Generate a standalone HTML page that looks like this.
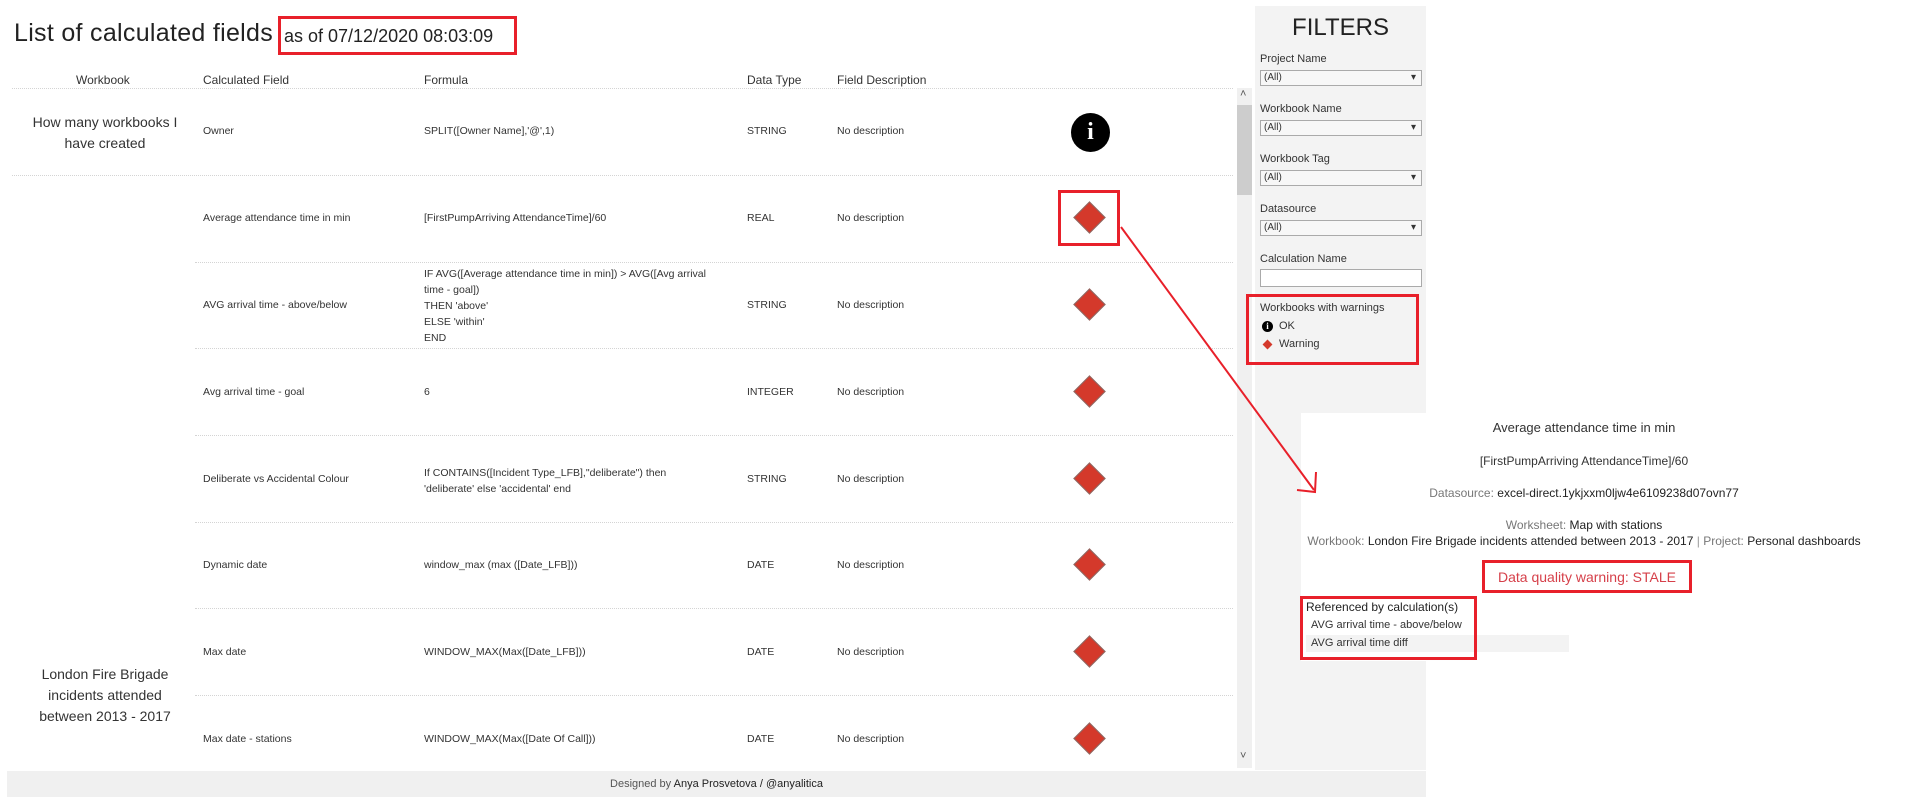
<!DOCTYPE html>
<html><head><meta charset="utf-8"><style>
*{margin:0;padding:0;box-sizing:border-box}
body{width:1914px;height:806px;background:#fff;position:relative;overflow:hidden;font-family:"Liberation Sans",sans-serif;color:#333}
.a{position:absolute;white-space:nowrap}
.s{font-size:10.5px}
.hd{font-size:12px;color:#333}
.sep{position:absolute;height:0;border-top:1px dotted #d4d4d4}
.dia{position:absolute;width:23px;height:23px;background:#d4392b;border:1px solid #8a6a66;transform:rotate(45deg)}
.rb{position:absolute;border:3px solid #e8202a}
.lbl{position:absolute;left:1260px;font-size:11px;color:#333}
.dd{position:absolute;left:1260px;width:162px;height:16px;border:1px solid #aaa;background:#f7f7f7;font-size:10px;padding-left:3px;line-height:14px}
.dd:after{content:"▾";position:absolute;right:5px;top:0;font-size:10px}
.wb{position:absolute;text-align:center;font-size:14px;line-height:21px;color:#333}
</style></head><body>
<div class="a" style="left:14px;top:19px;font-size:25px;color:#222;letter-spacing:0.3px">List of calculated fields</div>
<div class="a" style="left:284px;top:26px;font-size:18px;color:#222">as of 07/12/2020 08:03:09</div>
<div class="rb" style="left:278px;top:16px;width:239px;height:39px"></div>

<div class="a hd" style="left:76px;top:73px">Workbook</div>
<div class="a hd" style="left:203px;top:73px">Calculated Field</div>
<div class="a hd" style="left:424px;top:73px">Formula</div>
<div class="a hd" style="left:747px;top:73px">Data Type</div>
<div class="a hd" style="left:837px;top:73px">Field Description</div>
<div class="sep" style="left:12px;top:88px;width:1221px"></div>
<div class="sep" style="left:12px;top:175px;width:1221px"></div>
<div class="sep" style="left:195px;top:262px;width:1038px"></div>
<div class="sep" style="left:195px;top:348px;width:1038px"></div>
<div class="sep" style="left:195px;top:435px;width:1038px"></div>
<div class="sep" style="left:195px;top:522px;width:1038px"></div>
<div class="sep" style="left:195px;top:608px;width:1038px"></div>
<div class="sep" style="left:195px;top:695px;width:1038px"></div>

<div class="wb" style="left:10px;top:112px;width:190px">How many workbooks I<br>have created</div>
<div class="wb" style="left:10px;top:664px;width:190px">London Fire Brigade<br>incidents attended<br>between 2013 - 2017</div>

<div class="a s" style="left:203px;top:125px">Owner</div>
<div class="a s" style="left:424px;top:125px">SPLIT([Owner Name],'@',1)</div>
<div class="a s" style="left:747px;top:125px">STRING</div>
<div class="a s" style="left:837px;top:125px">No description</div>
<div class="a" style="left:1071px;top:113px;width:39px;height:39px;border-radius:50%;background:#000;color:#fff;font:bold 24px 'Liberation Serif',serif;text-align:center;line-height:39px">i</div>

<div class="a s" style="left:203px;top:212px">Average attendance time in min</div>
<div class="a s" style="left:424px;top:212px">[FirstPumpArriving AttendanceTime]/60</div>
<div class="a s" style="left:747px;top:212px">REAL</div>
<div class="a s" style="left:837px;top:212px">No description</div>
<div class="dia" style="left:1078px;top:206px"></div>
<div class="rb" style="left:1058px;top:190px;width:62px;height:56px"></div>

<div class="a s" style="left:203px;top:299px">AVG arrival time - above/below</div>
<div class="a s" style="left:424px;top:266px;line-height:16px">IF AVG([Average attendance time in min]) &gt; AVG([Avg arrival<br>time - goal])<br>THEN 'above'<br>ELSE 'within'<br>END</div>
<div class="a s" style="left:747px;top:299px">STRING</div>
<div class="a s" style="left:837px;top:299px">No description</div>
<div class="dia" style="left:1078px;top:293px"></div>

<div class="a s" style="left:203px;top:386px">Avg arrival time - goal</div>
<div class="a s" style="left:424px;top:386px">6</div>
<div class="a s" style="left:747px;top:386px">INTEGER</div>
<div class="a s" style="left:837px;top:386px">No description</div>
<div class="dia" style="left:1078px;top:380px"></div>

<div class="a s" style="left:203px;top:473px">Deliberate vs Accidental Colour</div>
<div class="a s" style="left:424px;top:465px;line-height:16px">If CONTAINS([Incident Type_LFB],"deliberate") then<br>'deliberate' else 'accidental' end</div>
<div class="a s" style="left:747px;top:473px">STRING</div>
<div class="a s" style="left:837px;top:473px">No description</div>
<div class="dia" style="left:1078px;top:467px"></div>

<div class="a s" style="left:203px;top:559px">Dynamic date</div>
<div class="a s" style="left:424px;top:559px">window_max (max ([Date_LFB]))</div>
<div class="a s" style="left:747px;top:559px">DATE</div>
<div class="a s" style="left:837px;top:559px">No description</div>
<div class="dia" style="left:1078px;top:553px"></div>

<div class="a s" style="left:203px;top:646px">Max date</div>
<div class="a s" style="left:424px;top:646px">WINDOW_MAX(Max([Date_LFB]))</div>
<div class="a s" style="left:747px;top:646px">DATE</div>
<div class="a s" style="left:837px;top:646px">No description</div>
<div class="dia" style="left:1078px;top:640px"></div>

<div class="a s" style="left:203px;top:733px">Max date - stations</div>
<div class="a s" style="left:424px;top:733px">WINDOW_MAX(Max([Date Of Call]))</div>
<div class="a s" style="left:747px;top:733px">DATE</div>
<div class="a s" style="left:837px;top:733px">No description</div>
<div class="dia" style="left:1078px;top:727px"></div>

<div class="a" style="left:1237px;top:88px;width:15px;height:680px;background:#f0f0f0"></div>
<div class="a" style="left:1237px;top:105px;width:15px;height:90px;background:#cdcdcd"></div>
<div class="a" style="left:1240px;top:88px;font-size:11px;color:#555">˄</div>
<div class="a" style="left:1240px;top:750px;font-size:11px;color:#555">˅</div>

<div class="a" style="left:7px;top:771px;width:1419px;height:26px;background:#f0f0f0;font-size:11px;text-align:center;line-height:26px;color:#555">Designed by <span style="color:#222">Anya Prosvetova / @anyalitica</span></div>

<div class="a" style="left:1255px;top:6px;width:171px;height:764px;background:#f3f3f3"></div>
<div class="a" style="left:1255px;top:14px;width:171px;text-align:center;font-size:24px;color:#222">FILTERS</div>
<div class="lbl" style="top:53px">Project Name</div><div class="dd" style="top:70px">(All)</div>
<div class="lbl" style="top:103px">Workbook Name</div><div class="dd" style="top:120px">(All)</div>
<div class="lbl" style="top:153px">Workbook Tag</div><div class="dd" style="top:170px">(All)</div>
<div class="lbl" style="top:203px">Datasource</div><div class="dd" style="top:220px">(All)</div>
<div class="lbl" style="top:253px">Calculation Name</div>
<div class="a" style="left:1260px;top:269px;width:162px;height:18px;border:1px solid #aaa;background:#fff"></div>
<div class="lbl" style="top:302px">Workbooks with warnings</div>
<div class="a" style="left:1262px;top:321px;width:11px;height:11px;border-radius:50%;background:#000;color:#fff;font:bold 9px 'Liberation Serif',serif;text-align:center;line-height:11px">i</div>
<div class="lbl" style="left:1279px;top:320px">OK</div>
<div class="a" style="left:1264px;top:341px;width:7px;height:7px;background:#d4392b;transform:rotate(45deg)"></div>
<div class="lbl" style="left:1279px;top:338px">Warning</div>
<div class="rb" style="left:1246px;top:294px;width:173px;height:71px"></div>

<div class="a" style="left:1301px;top:413px;width:613px;height:248px;background:#fff"></div>
<div class="a" style="left:1301px;top:420px;width:566px;text-align:center;font-size:13px;color:#333">Average attendance time in min</div>
<div class="a" style="left:1301px;top:454px;width:566px;text-align:center;font-size:12px;color:#333">[FirstPumpArriving AttendanceTime]/60</div>
<div class="a" style="left:1301px;top:486px;width:566px;text-align:center;font-size:12px;color:#222"><span style="color:#777">Datasource:</span> excel-direct.1ykjxxm0ljw4e6109238d07ovn77</div>
<div class="a" style="left:1301px;top:518px;width:566px;text-align:center;font-size:12px;color:#222"><span style="color:#777">Worksheet:</span> Map with stations</div>
<div class="a" style="left:1301px;top:534px;width:566px;text-align:center;font-size:12px;color:#222"><span style="color:#777">Workbook:</span> London Fire Brigade incidents attended between 2013 - 2017 <span style="color:#999">|</span> <span style="color:#777">Project:</span> Personal dashboards</div>
<div class="a" style="left:1482px;top:560px;width:210px;height:33px;text-align:center;line-height:28px;font-size:14px;color:#d6404a;border:3px solid #e8202a">Data quality warning: STALE</div>
<div class="a" style="left:1306px;top:635px;width:263px;height:17px;background:#f3f3f3"></div>
<div class="a" style="left:1306px;top:600px;font-size:12px;color:#222">Referenced by calculation(s)</div>
<div class="a" style="left:1311px;top:619px;font-size:11px;color:#333">AVG arrival time - above/below</div>
<div class="a" style="left:1311px;top:637px;font-size:11px;color:#333">AVG arrival time diff</div>
<div class="rb" style="left:1300px;top:596px;width:177px;height:64px"></div>

<svg class="a" style="left:0;top:0" width="1914" height="806">
<line x1="1121" y1="227" x2="1314" y2="490" stroke="#e8202a" stroke-width="2"/>
<polyline points="1297,490 1315,492 1316,472" fill="none" stroke="#e8202a" stroke-width="2"/>
</svg>
</body></html>
